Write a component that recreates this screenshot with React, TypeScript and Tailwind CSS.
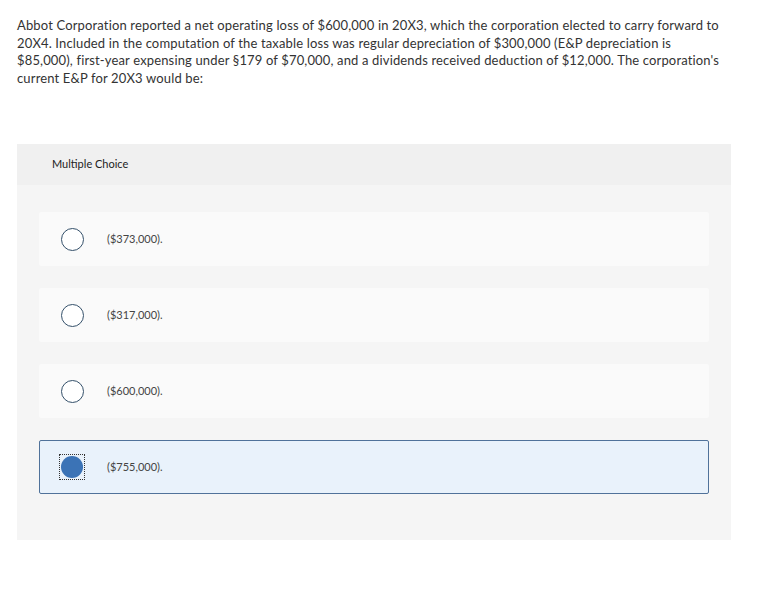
const options = [
  { label: '($373,000).', selected: false },
  { label: '($317,000).', selected: false },
  { label: '($600,000).', selected: false },
  { label: '($755,000).', selected: true },
];

export default function App() {
  return (
    <div className="min-h-[597px] bg-white text-[#333] font-['Lato','Open_Sans',sans-serif]">
      <p className="px-[17px] pt-[17px] text-[13px] leading-[17.5px] tracking-[0.15px] w-[740px]">
        Abbot Corporation reported a net operating loss of $600,000 in 20X3, which the corporation elected to carry forward to
        20X4. Included in the computation of the taxable loss was regular depreciation of $300,000 (E&amp;P depreciation is
        $85,000), first-year expensing under §179 of $70,000, and a dividends received deduction of $12,000. The corporation's
        current E&amp;P for 20X3 would be:
      </p>

      <div className="mt-[57px] ml-[17px] w-[714px] h-[396px] bg-[#f5f5f5]">
        <div className="h-[41px] bg-[#f0f0f0] pl-[35px] flex items-center text-[11px] text-[#222]">
          Multiple Choice
        </div>
        <div className="px-[22px] pt-[27px] flex flex-col gap-[22px]">
          {options.map((o) => (
            <div
              key={o.label}
              className={
                o.selected
                  ? 'h-[54px] flex items-center rounded-[2px] border border-[#50729a] bg-[#e9f2fb]'
                  : 'h-[54px] flex items-center rounded-[2px] border border-transparent bg-[#fafafa]'
              }
            >
              <div className="ml-[20px] w-[24px] h-[24px] flex items-center justify-center">
                {o.selected ? (
                  <div className="w-[24px] h-[24px] outline outline-1 outline-dotted outline-[#333] flex items-center justify-center">
                    <div className="w-[22px] h-[22px] rounded-full bg-[#3b73b6]" />
                  </div>
                ) : (
                  <div className="w-[23px] h-[23px] rounded-full border border-[#34506a] bg-white" />
                )}
              </div>
              <span className="ml-[23px] text-[11px] text-[#444]">{o.label}</span>
            </div>
          ))}
        </div>
      </div>
    </div>
  );
}
